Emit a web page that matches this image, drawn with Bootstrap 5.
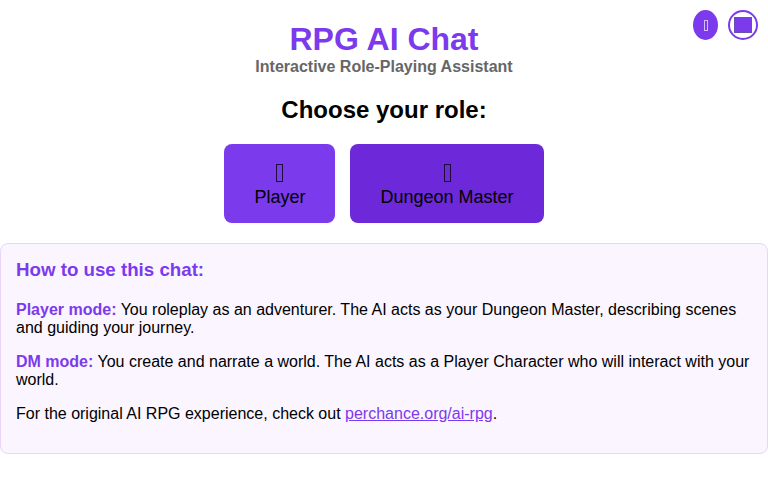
<!DOCTYPE html>
<html lang="en">
<head>
  <meta charset="UTF-8" />
  <meta name="viewport" content="width=device-width, initial-scale=1.0"/>
  <title>RPG AI Chat</title>
  <link href="https://cdn.jsdelivr.net/npm/bootstrap@5.3.3/dist/css/bootstrap.min.css" rel="stylesheet" />
  <style>
    body { font-family: "Liberation Sans", Arial, sans-serif; color: #000; line-height: normal; }
    .top-actions { position: absolute; top: 10px; right: 10px; }
    .theme-btn { width: 25px; height: 30px; border: 0; padding: 0; margin-right: 10px; border-radius: 50%; background: #7c3aed; display: flex; align-items: center; justify-content: center; }
    .theme-btn i { display: block; width: 4px; height: 11px; border: 1px solid #d6bcfa; }
    .colour-pick { width: 30px; height: 30px; padding: 0; border: 2px solid #7c3aed; border-radius: 50%; background: #fff; display: flex; align-items: center; justify-content: center; }
    .colour-pick span { display: block; width: 18px; height: 16px; background: #7c3aed; border: 1px solid #6a4fb0; }
    .app-title { font-size: 32px; font-weight: 700; color: #7c3aed; line-height: 37px; margin: 0; padding-top: 21px; }
    .app-sub { font-size: 16px; font-weight: 700; color: #666; line-height: 18px; margin: 0; }
    .role-title { font-size: 24px; font-weight: 700; line-height: 28px; margin: 20px 0 20px; }
    .role-btn { border: 0; border-radius: 8px; padding: 15px 30px; font-size: 18px; line-height: 21px; color: #000; }
    .role-btn i { display: block; width: 7px; height: 18px; margin: 5px auto; border: 1px solid #000; opacity: .75; }
    .role-player { background: #7c3aed; margin-right: 15px; }
    .role-dm { background: #6d28d9; }
    .help-box { background: #faf5ff; border: 1px solid #e9d5f5; border-radius: 8px; padding: 15px; margin-top: 20px; height: 211px; }
    .help-box h5 { font-size: 18.72px; font-weight: 700; color: #7c3aed; line-height: 22px; margin: 0 0 20px; }
    .help-box p { font-size: 16px; line-height: 18px; margin: 0 0 16px; }
    .help-box strong { color: #7c3aed; }
    .help-box a { color: #7c3aed; }
  </style>
</head>
<body>
  <div class="top-actions d-flex align-items-center">
    <button class="theme-btn"><i></i></button>
    <div class="colour-pick"><span></span></div>
  </div>

  <div class="text-center">
    <h1 class="app-title">RPG AI Chat</h1>
    <p class="app-sub">Interactive Role-Playing Assistant</p>
    <h2 class="role-title">Choose your role:</h2>
    <div class="d-flex justify-content-center role-row">
      <button class="role-btn role-player"><i></i>Player</button>
      <button class="role-btn role-dm"><i></i>Dungeon Master</button>
    </div>
  </div>

  <div class="help-box">
    <h5>How to use this chat:</h5>
    <p><strong>Player mode:</strong> You roleplay as an adventurer. The AI acts as your Dungeon Master, describing scenes and guiding your journey.</p>
    <p><strong>DM mode:</strong> You create and narrate a world. The AI acts as a Player Character who will interact with your world.</p>
    <p>For the original AI RPG experience, check out <a href="#">perchance.org/ai-rpg</a>.</p>
  </div>
</body>
</html>
